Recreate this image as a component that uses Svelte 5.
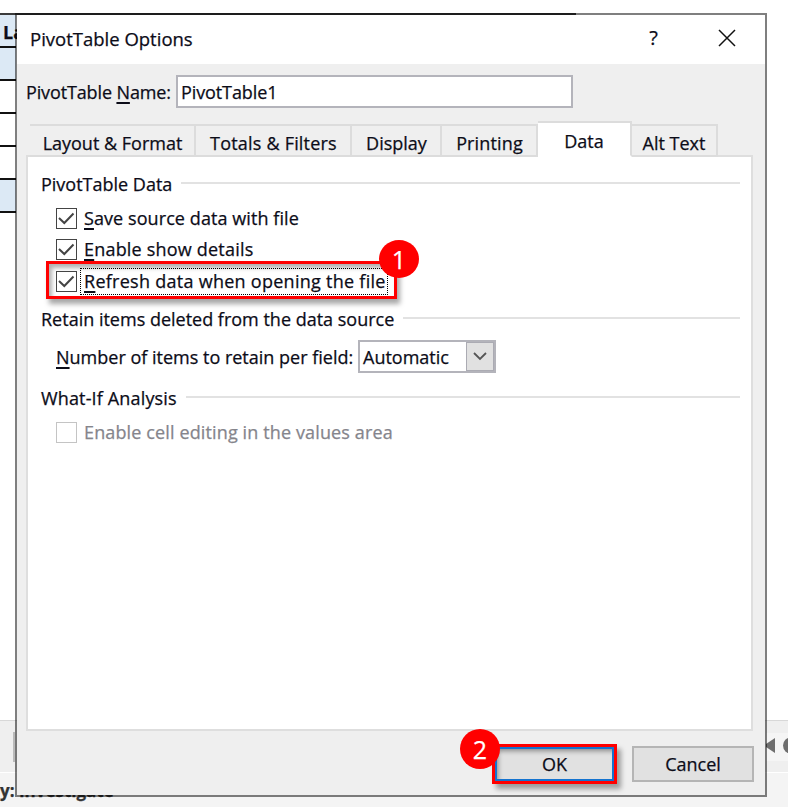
<script>
    let pivotName = $state('PivotTable1');
    let activeTab = $state('data');

    const tabs = [
        { id: 'layout', label: 'Layout & Format' },
        { id: 'totals', label: 'Totals & Filters' },
        { id: 'display', label: 'Display' },
        { id: 'printing', label: 'Printing' },
        { id: 'data', label: 'Data' },
        { id: 'alt', label: 'Alt Text' }
    ];

    let options = $state([
        { id: 'save', key: 'S', rest: 'ave source data with file', checked: true },
        { id: 'details', key: 'E', rest: 'nable show details', checked: true },
        { id: 'refresh', key: 'R', rest: 'efresh data when opening the file', checked: true, step: 1 }
    ]);
</script>

<div class="screen">
    <div class="sheet">
        <div class="row header">La</div>
        <div class="row blue"></div>
        <div class="row"></div>
        <div class="row"></div>
        <div class="row"></div>
        <div class="row blue"></div>
    </div>
    <div class="scrollbar">
        <span class="splitter"></span>
        <svg class="nav" width="22" height="28" viewBox="0 0 22 28">
            <path d="M0 11 L9 5 V20 L0 14 Z" fill="#6e6e6e" />
            <circle cx="25" cy="12.5" r="8" fill="#6e6e6e" />
        </svg>
    </div>
    <div class="status">y: Investigate</div>

    <div class="dialog">
        <header>
            <h1>PivotTable Options</h1>
            <button class="help">?</button>
            <button class="close" aria-label="Close">
                <svg width="18" height="18" viewBox="0 0 18 18">
                    <path d="M1 1 L17 17 M17 1 L1 17" stroke="#111" stroke-width="1.5" fill="none" />
                </svg>
            </button>
        </header>

        <div class="name-row">
            <label for="name">PivotTable <u>N</u>ame:</label>
            <input id="name" bind:value={pivotName} />
        </div>

        <nav>
            {#each tabs as tab}
                <button class="tab {tab.id}" class:active={activeTab === tab.id} onclick={() => (activeTab = tab.id)}>
                    <span>{tab.label}</span>
                </button>
            {/each}
        </nav>

        <main>
            <h2 class="t-data"><span>PivotTable Data</span></h2>
            <div class="options">
                {#each options as option}
                    <button class="option {option.id}" class:marked={option.step} onclick={() => (option.checked = !option.checked)}>
                        <span class="box">
                            {#if option.checked}
                                <svg width="17" height="17" viewBox="0 0 17 17">
                                    <path d="M1 8 L6.3 13 L15.5 3.5" stroke="#444" stroke-width="2" fill="none" />
                                </svg>
                            {/if}
                        </span>
                        <span class="text"><u>{option.key}</u>{option.rest}</span>
                        {#if option.step}
                            <span class="badge">{option.step}</span>
                        {/if}
                    </button>
                {/each}
            </div>

            <h2 class="t-retain"><span>Retain items deleted from the data source</span></h2>
            <div class="retain">
                <span class="retain-label"><u>N</u>umber of items to retain per field:</span>
                <div class="select">
                    <span>Automatic</span>
                    <i>
                        <svg width="14" height="9" viewBox="0 0 14 9">
                            <path d="M1 1 L7 7 L13 1" stroke="#555" stroke-width="1.8" fill="none" />
                        </svg>
                    </i>
                </div>
            </div>

            <h2 class="t-whatif"><span>What-If Analysis</span></h2>
            <div class="option disabled">
                <span class="box"></span>
                <span class="text">Enable cell editing in the values area</span>
            </div>
        </main>

        <footer>
            <button class="ok"><span>OK</span><b class="badge">2</b></button>
            <button class="cancel"><span>Cancel</span></button>
        </footer>
    </div>
</div>

<style>
    :global(body) {
        margin: 0;
        background: #fff;
    }

    .screen {
        position: relative;
        width: 788px;
        height: 807px;
        overflow: hidden;
        box-sizing: border-box;
        padding-top: 13px;
        font-family: "Open Sans", "Noto Sans", sans-serif;
        font-size: 18px;
        color: #0c0c18;
        -webkit-text-stroke: 0.25px;
    }

    .screen * {
        box-sizing: border-box;
    }

    button {
        font: inherit;
        color: inherit;
        letter-spacing: inherit;
        padding: 0;
        border: 0;
        background: none;
        white-space: nowrap;
    }

    u {
        text-decoration-thickness: 1.5px;
        text-underline-offset: 3px;
    }

    /* workbook behind the dialog */
    .sheet {
        width: 576px;
        height: 707px;
        border-top: 2px solid #3b3b3b;
    }

    .row {
        width: 16px;
        height: 33px;
        border-bottom: 2px solid #111;
    }

    .row.header {
        padding-left: 3px;
        font-weight: 700;
        line-height: 34px;
    }

    .header,
    .blue {
        background: #dce9f5;
    }

    .scrollbar {
        display: flex;
        justify-content: space-between;
        align-items: center;
        height: 53px;
        padding-left: 13px;
        background: #efefef;
        border-top: 1px solid #d8d8d8;
        border-bottom: 1px solid #fff;
    }

    .splitter {
        width: 2px;
        height: 30px;
        background: #bbb;
    }

    .nav {
        background: #f5f5f5;
    }

    .status {
        height: 34px;
        background: #f4f4f4;
        line-height: 35px;
        font-size: 17px;
        font-weight: 700;
        color: #333;
    }

    .dialog {
        position: absolute;
        left: 15px;
        top: 13px;
        width: 752px;
        height: 784px;
        display: flex;
        flex-direction: column;
        background: #efefef;
        background-clip: padding-box;
        border: 2px solid rgba(0, 0, 0, .5);
    }

    header {
        display: flex;
        align-items: center;
        height: 49px;
        padding: 0 29px 0 13px;
        background: #fff;
    }

    h1 {
        flex: 1;
        margin: -2px 0 0;
        font-size: 18.5px;
        font-weight: 400;
    }

    .help {
        font-size: 20px;
        line-height: 20px;
        margin: -3px 60px 0 0;
    }

    .close {
        display: flex;
        margin-top: -3px;
    }

    .name-row {
        display: flex;
        align-items: center;
        margin-top: 11px;
        height: 33px;
        padding-left: 9px;
    }

    .name-row label {
        width: 150px;
        white-space: nowrap;
        letter-spacing: -0.13px;
    }

    input {
        width: 397px;
        height: 33px;
        padding: 0 3px;
        border: 2px solid #b4b4bb;
        font: inherit;
        color: inherit;
        letter-spacing: -0.1px;
    }

    nav {
        display: flex;
        align-items: flex-end;
        height: 36px;
        margin: 13px 0 0 13px;
        position: relative;
        z-index: 1;
    }

    .tab {
        height: 33px;
        padding: 5px 0 0 1px;
        border: solid #dcdcdc;
        border-width: 2px 2px 2px 0;
    }

    .tab.active {
        height: 36px;
        border-bottom-color: #fff;
        background: #fff;
        padding: 4px 0 0;
    }

    .layout { width: 166px; }
    .totals { width: 156px; letter-spacing: 0.2px; }
    .display { width: 90px; }
    .printing { width: 96px; letter-spacing: 0.15px; }
    .data { width: 94px; }
    .alt { width: 86px; padding-left: 0; }

    main {
        width: 727px;
        height: 576px;
        margin: -2px 0 0 9px;
        padding: 14px 11px 0 13px;
        background: #fff;
        border: 2px solid #dedede;
    }

    h2 {
        display: flex;
        align-items: center;
        gap: 9px;
        height: 26px;
        margin: 0;
        font-size: 18px;
        font-weight: 400;
        white-space: nowrap;
    }

    h2::after {
        content: "";
        flex: 1;
        height: 2px;
        margin-top: -2px;
        background: #e2e2e2;
    }

    .options {
        margin-top: 6px;
    }

    .option {
        position: relative;
        display: flex;
        align-items: center;
        height: 31px;
        margin-left: 15px;
        text-align: left;
    }

    .box {
        display: flex;
        width: 21px;
        height: 21px;
        align-items: center;
        justify-content: center;
        margin-right: 4px;
        border: 1.5px solid #444;
        background: #fff;
    }

    .text {
        padding: 0 3px;
        white-space: nowrap;
        line-height: 25px;
    }

    .save .text { letter-spacing: 0.08px; }
    .details .text { letter-spacing: 0.2px; }
    .refresh .text { letter-spacing: 0.27px; padding-right: 1px; }
    .disabled .text { letter-spacing: 0.13px; }
    .t-whatif { letter-spacing: 0.15px; }

    .marked {
        width: 351px;
        height: 38px;
        margin: -4px 0 0 5px;
        padding: 2px 0 0 7px;
        border: 3px solid #f00;
        box-shadow: 3px 5px 5px rgba(0, 0, 0, .35), inset 3px 4px 4px rgba(0, 0, 0, .3);
    }

    .marked .text {
        outline: 1.5px dotted #000;
    }

    .badge {
        position: absolute;
        display: flex;
        align-items: center;
        justify-content: center;
        width: 40px;
        height: 40px;
        border-radius: 50%;
        background: #f00;
        color: #fff;
        font-size: 25px;
        font-weight: 400;
    }

    .marked .badge {
        left: 330px;
        top: -24px;
        height: 38px;
    }

    .t-retain {
        margin-top: 7px;
    }

    .retain {
        display: flex;
        align-items: center;
        margin: 8px 0 0 15px;
        height: 33px;
    }

    .retain-label {
        width: 302px;
        white-space: nowrap;
    }

    .select {
        display: flex;
        width: 138px;
        height: 33px;
        border: 2px solid #b4b4bb;
        line-height: 30px;
    }

    .select span {
        flex: 1;
        padding-left: 3px;
    }

    .select i {
        display: flex;
        align-items: center;
        justify-content: center;
        width: 28px;
        border: 1.5px solid #ababb3;
        background: #e1e1e1;
    }

    .t-whatif {
        margin-top: 12px;
    }

    .disabled {
        margin-top: 6px;
        color: #85858c;
    }

    .disabled .box {
        border-color: #c4c4c4;
    }

    footer {
        display: flex;
        gap: 15px;
        margin: 13px 0 0 475px;
    }

    .ok {
        position: relative;
        width: 125px;
        height: 40px;
        border: 3px solid #f00;
        background: #e1e1e1;
        box-shadow: 4px 5px 5px rgba(0, 0, 0, .35), inset 0 0 0 2px #1473cf, inset 3px 4px 5px rgba(0, 0, 0, .4);
    }

    .ok .badge {
        left: -35px;
        top: -18px;
    }

    .cancel {
        width: 122px;
        height: 36px;
        margin-top: 2px;
        border: 2px solid #b5b5b5;
        background: #e1e1e1;
    }
</style>
